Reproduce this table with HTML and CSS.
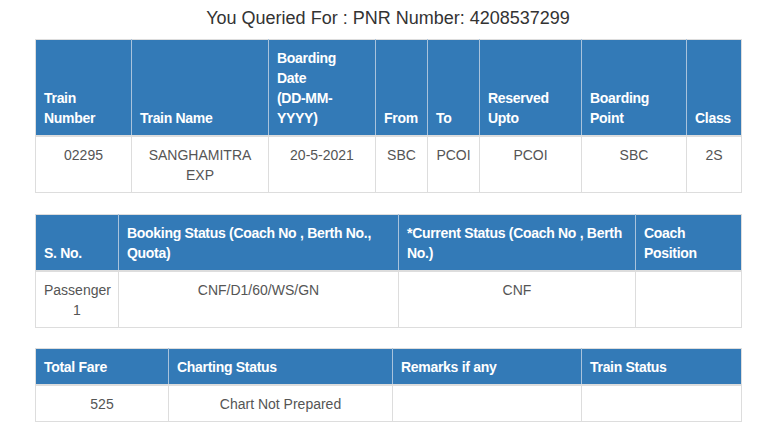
FILE: index.html
```html
<!DOCTYPE html>
<html>
<head>
<meta charset="utf-8">
<link rel="stylesheet" href="styles.css">
</head>
<body>
<div class="wrap">
  <h3 class="title">You Queried For : PNR Number: 4208537299</h3>
  <table class="grid t1">
    <colgroup>
      <col style="width:96px"><col style="width:137px"><col style="width:107px"><col style="width:52px"><col style="width:52px"><col style="width:102px"><col style="width:105px"><col style="width:55px">
    </colgroup>
    <thead>
      <tr>
        <th>Train Number</th>
        <th>Train Name</th>
        <th>Boarding Date<br>(DD-MM-YYYY)</th>
        <th>From</th>
        <th>To</th>
        <th>Reserved Upto</th>
        <th>Boarding Point</th>
        <th>Class</th>
      </tr>
    </thead>
    <tbody>
      <tr>
        <td>02295</td>
        <td>SANGHAMITRA EXP</td>
        <td>20-5-2021</td>
        <td>SBC</td>
        <td>PCOI</td>
        <td>PCOI</td>
        <td>SBC</td>
        <td>2S</td>
      </tr>
    </tbody>
  </table>

  <table class="grid t2">
    <colgroup>
      <col style="width:83px"><col style="width:280px"><col style="width:237px"><col style="width:106px">
    </colgroup>
    <thead>
      <tr>
        <th>S. No.</th>
        <th>Booking Status (Coach No , Berth No., Quota)</th>
        <th>*Current Status (Coach No , Berth No.)</th>
        <th>Coach Position</th>
      </tr>
    </thead>
    <tbody>
      <tr>
        <td>Passenger 1</td>
        <td>CNF/D1/60/WS/GN</td>
        <td>CNF</td>
        <td></td>
      </tr>
    </tbody>
  </table>

  <table class="grid t3">
    <colgroup>
      <col style="width:133px"><col style="width:224px"><col style="width:189px"><col style="width:160px">
    </colgroup>
    <thead>
      <tr>
        <th>Total Fare</th>
        <th>Charting Status</th>
        <th>Remarks if any</th>
        <th>Train Status</th>
      </tr>
    </thead>
    <tbody>
      <tr>
        <td>525</td>
        <td>Chart Not Prepared</td>
        <td></td>
        <td></td>
      </tr>
    </tbody>
  </table>
</div>
</body>
</html>
```

FILE: styles.css
```css
html, body {
  margin: 0;
  padding: 0;
  background: #fff;
}
body {
  font-family: "Liberation Sans", Arial, sans-serif;
  font-size: 14px;
  line-height: 20px;
  color: #333;
}
.wrap {
  width: 706px;
  margin-left: 35px;
}
.title {
  margin: 6px 0 0 0;
  height: 33px;
  font-size: 18px;
  font-weight: normal;
  line-height: 24px;
  text-align: center;
  color: #333;
}
.grid {
  width: 706px;
  table-layout: fixed;
  border-collapse: collapse;
  border: 1px solid #ddd;
}
.grid th {
  background: #337ab7;
  color: #fff;
  font-weight: bold;
  text-align: left;
  vertical-align: bottom;
  padding: 8px 8px 7px;
  letter-spacing: -0.3px;
  border: 1px solid #a9c3dc;
  border-bottom: 2px solid #ddd;
  border-top-color: #ddd;
}
.grid th:first-child { border-left-color: #ddd; }
.grid th:last-child { border-right-color: #ddd; }
.grid td {
  padding: 8px 8px 7px;
  text-align: center;
  vertical-align: top;
  color: #555;
  border: 1px solid #ddd;
}
.t1 { margin-bottom: 21px; }
.t2 { margin-bottom: 20px; }
```
